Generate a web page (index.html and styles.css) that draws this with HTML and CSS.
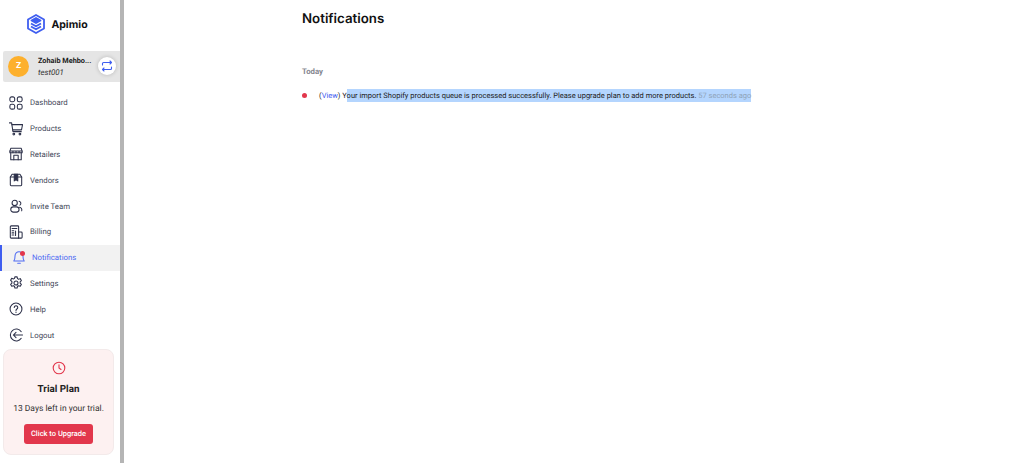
FILE: index.html
```html
<!DOCTYPE html>
<html lang="en">

<head>
    <meta charset="UTF-8">
    <title>Notifications</title>
    <link rel="stylesheet" href="styles.css">
</head>

<body>
    <aside class="sidebar">
        <div class="logo">
            <svg width="18" height="20" viewBox="0 0 18 20" fill="none" stroke="#3f5ef0" stroke-width="1.8" stroke-linejoin="round">
                <path d="M9 1l8 4.5v9L9 19l-8-4.5v-9z" />
                <path d="M4.5 6.5L9 4l4.500 2.500L9 9z" fill="#3f5ef0" />
                <path d="M4 9.500l5 2.800 5-2.800M4 12.500l5 2.800 5-2.800" />
            </svg>
            <span class="logoText">Apimio</span>
        </div>

        <div class="user">
            <div class="avatar">Z</div>
            <div class="userInfo">
                <div class="userName">Zohaib Mehbo...</div>
                <div class="userOrg">test001</div>
            </div>
            <div class="switch">
                <svg width="12" height="12" viewBox="0 0 12 12" fill="none" stroke="#3f5ef0" stroke-width="1.1" stroke-linecap="round" stroke-linejoin="round">
                    <path d="M1.500 5V3.500a1 1 0 0 1 1-1H10.500M9 1l1.500 1.500L9 4" />
                    <path d="M10.500 7v1.500a1 1 0 0 1-1 1H1.500M3 8L1.500 9.500 3 11" />
                </svg>
            </div>
        </div>

        <nav class="menu">
            <a class="item">
                <svg class="icon" viewBox="0 0 16 16">
                    <rect x="1" y="1" width="5.500" height="5.500" rx="2" />
                    <rect x="9.500" y="1" width="5.500" height="5.500" rx="2" />
                    <rect x="1" y="9.500" width="5.500" height="5.500" rx="2" />
                    <rect x="9.500" y="9.500" width="5.500" height="5.500" rx="2" />
                </svg>
                Dashboard
            </a>
            <a class="item">
                <svg class="icon" viewBox="0 0 16 16">
                    <path d="M0.500 1H3l1.500 10h9.500" />
                    <path d="M3.300 3H15.500l-1.200 6H4.200" />
                    <circle cx="5.500" cy="13.800" r="1" />
                    <circle cx="12.500" cy="13.800" r="1" />
                </svg>
                Products
            </a>
            <a class="item">
                <svg class="icon" viewBox="0 0 16 16">
                    <path d="M2 1.500h12l1 3.500v1.500H1V5z" />
                    <path d="M1 4.500h14M4.500 4.500v2M8 4.500v2M11.500 4.500v2" />
                    <path d="M2 6.500v8h12v-8" />
                    <path d="M5.500 14.500v-5h5v5" />
                </svg>
                Retailers
            </a>
            <a class="item">
                <svg class="icon" viewBox="0 0 16 16">
                    <path d="M3.500 1.500h9l2 3v9a1 1 0 0 1-1 1h-11a1 1 0 0 1-1-1v-9z" />
                    <path d="M1.500 4.500h13" />
                    <path class="solid" d="M6 1.500h4V9L8 7.800 6 9z" />
                </svg>
                Vendors
            </a>
            <a class="item">
                <svg class="icon" viewBox="0 0 16 16">
                    <circle cx="6.500" cy="4.500" r="3" />
                    <path d="M5 9h3.500a3 3 0 0 1 0 6H5a3 3 0 0 1 0-6z" />
                    <path d="M11.500 2.500a2.500 2.500 0 0 1 1 4.500M12 9.500a3 3 0 0 1 2.500 4" />
                </svg>
                Invite Team
            </a>
            <a class="item">
                <svg class="icon" viewBox="0 0 16 16">
                    <path d="M11 15H2.500a1 1 0 0 1-1-1V2a1 1 0 0 1 1-1H10a1 1 0 0 1 1 1z" />
                    <path d="M3.500 4h5.500M3.500 6.500h2M3.500 9h2M3.500 11.500h2M7.500 7v5" />
                    <path d="M11 8h3a1 1 0 0 1 1 1v5a1 1 0 0 1-1 1h-3" />
                </svg>
                Billing
            </a>
            <a class="item active">
                <svg class="icon" viewBox="0 0 16 16">
                    <path d="M8 1.500a4.500 4.500 0 0 0-4.500 4.500c0 4.500-1.500 6-1.500 6h12s-1.500-1.500-1.500-6A4.500 4.500 0 0 0 8 1.500z" />
                    <path d="M6.500 14.500h3" />
                </svg>
                <span class="dot"></span>
                Notifications
            </a>
            <a class="item">
                <svg class="icon" viewBox="0 0 16 16">
                    <circle cx="8" cy="8" r="2.300" />
                    <path d="M6.700 1h2.600l.4 2 1.300.7 1.900-.7 1.300 2.300-1.500 1.300v1.600l1.500 1.300-1.300 2.300-1.900-.7-1.300.7-.4 2H6.700l-.4-2-1.300-.7-1.900.7-1.300-2.300 1.500-1.300V6.300L1.800 5l1.300-2.300 1.900.7 1.300-.7z" />
                </svg>
                Settings
            </a>
            <a class="item">
                <svg class="icon" viewBox="0 0 16 16">
                    <circle cx="8" cy="8" r="6.800" />
                    <path d="M6 6.200a2 2 0 1 1 3 1.800c-.7.400-1 .8-1 1.600" />
                    <path d="M8 11.500v.5" />
                </svg>
                Help
            </a>
            <a class="item">
                <svg class="icon" viewBox="0 0 16 16">
                    <path d="M14 4.200A6.800 6.800 0 1 0 14 11.800" />
                    <path d="M15.500 8H5M8 5L5 8l3 3" />
                </svg>
                Logout
            </a>
        </nav>

        <div class="trial">
            <svg class="clock" width="14" height="14" viewBox="0 0 14 14" fill="none" stroke="#e2374c" stroke-width="1.100" stroke-linecap="round">
                <circle cx="7" cy="7" r="5.800" />
                <path d="M7 3.800V7l2 1.500" />
            </svg>
            <div class="trialTitle">Trial Plan</div>
            <div class="trialText">13 Days left in your trial.</div>
            <a class="upgrade">Click to Upgrade</a>
        </div>
    </aside>

    <main class="content">
        <h1>Notifications</h1>
        <div class="day">Today</div>
        <div class="notice">
            <span class="bullet"></span>
            <span class="message">(<a class="link">View</a>) Y<span class="selected">our import Shopify products queue is processed successfully. Please upgrade plan to add more products. <span class="time">57 seconds ago</span></span></span>
        </div>
    </main>
</body>

</html>
```

FILE: styles.css
```css
* {
    margin: 0;
    padding: 0;
    box-sizing: border-box;
}

body {
    display: flex;
    height: 100vh;
    overflow: hidden;
    background-color: #FFF;
    font-family: Roboto, "Liberation Sans", sans-serif;
    text-rendering: geometricPrecision;
}

.sidebar {
    width: 124px;
    height: 463px;
    flex-shrink: 0;
    border-right: 4px solid #b5b5b5;
    padding-top: 14px;
}

.logo {
    display: flex;
    justify-content: center;
    align-items: center;
    gap: 6px;
    height: 20px;
    padding-right: 5px;
}

.logoText {
    font-family: Inter, sans-serif;
    font-size: 10.500px;
    font-weight: 700;
    color: #111;
}

.user {
    display: flex;
    align-items: center;
    height: 31px;
    margin: 17px 0 0 3px;
    padding-left: 5px;
    background-color: #e5e5e5;
    border-radius: 2px 0 0 2px;
    position: relative;
}

.avatar {
    width: 21px;
    height: 21px;
    flex-shrink: 0;
    border-radius: 50%;
    background-color: #fdb02d;
    color: #FFF;
    font-size: 8.500px;
    font-weight: 700;
    line-height: 21px;
    text-align: center;
}

.userInfo {
    margin-left: 9px;
}

.userName {
    font-size: 7.300px;
    font-weight: 700;
    color: #222;
    white-space: nowrap;
    line-height: 11px;
}

.userOrg {
    font-size: 7.900px;
    font-style: italic;
    color: #333;
    line-height: 11px;
    margin-top: 1px;
}

.switch {
    position: absolute;
    left: 95px;
    top: 6px;
    width: 18px;
    height: 18px;
    display: flex;
    justify-content: center;
    align-items: center;
    background-color: #FFF;
    border-radius: 50%;
    box-shadow: 0 0 4px rgba(0, 0, 0, 0.2);
}

.menu {
    margin-top: 8px;
}

.item {
    display: flex;
    align-items: center;
    height: 25.800px;
    padding-left: 9px;
    font-size: 7.800px;
    color: #444859;
    position: relative;
}

.icon {
    width: 14px;
    height: 14px;
    margin-right: 7px;
    flex-shrink: 0;
    fill: none;
    stroke: #2c3049;
    stroke-width: 1.200;
    stroke-linecap: round;
    stroke-linejoin: round;
}

.icon .solid {
    fill: #2c3049;
}

.item.active {
    border-left: 2px solid #3f5ef0;
    background-color: #f2f2f2;
    padding-left: 10px;
    color: #4f6bf2;
}

.item.active .icon {
    stroke: #4f6bf2;
    width: 14px;
    height: 15px;
    margin-right: 6px;
}

.dot {
    position: absolute;
    left: 18px;
    top: 6px;
    width: 5px;
    height: 5px;
    border-radius: 50%;
    background-color: #e2374c;
}

.trial {
    display: flex;
    flex-direction: column;
    align-items: center;
    width: 111px;
    height: 106px;
    margin: 1.500px 0 0 3px;
    padding-top: 11px;
    background-color: #fdf1f1;
    border: 1px solid #f3eaea;
    border-radius: 8px;
}

.trialTitle {
    margin-top: 9px;
    font-size: 9.800px;
    font-weight: 700;
    color: #222;
}

.trialText {
    margin-top: 9px;
    font-size: 8.500px;
    color: #333;
}

.upgrade {
    margin-top: 10px;
    width: 69px;
    height: 20px;
    background-color: #e2374c;
    border-radius: 3px;
    color: #FFF;
    font-size: 7.500px;
    font-weight: 500;
    line-height: 20px;
    text-align: center;
}

.content {
    flex: 1;
    padding: 10px 0 0 178px;
}

h1 {
    font-family: Inter, sans-serif;
    font-size: 13.300px;
    font-weight: 600;
    line-height: 18px;
    color: #111;
}

.day {
    margin-top: 38px;
    font-size: 7.800px;
    font-weight: 700;
    line-height: 11px;
    color: #85878f;
}

.notice {
    display: flex;
    align-items: center;
    margin-top: 12px;
    height: 13px;
    font-size: 7.500px;
    color: #222;
    white-space: nowrap;
}

.bullet {
    width: 5px;
    height: 5px;
    margin-right: 12px;
    border-radius: 50%;
    background-color: #e2374c;
}

.link {
    color: #3f5ef0;
}

.selected {
    background-color: #b4d5fe;
    padding: 2px 0;
}

.time {
    color: #8fa3b8;
}
```
